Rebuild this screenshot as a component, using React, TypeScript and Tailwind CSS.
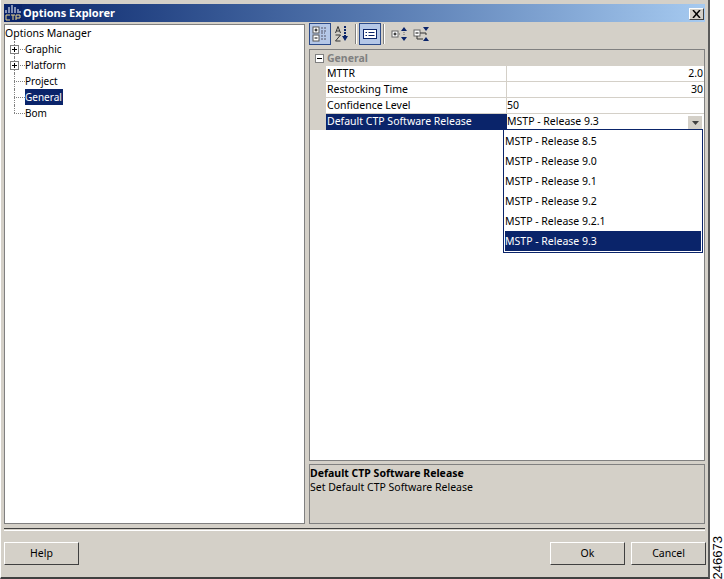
import React from 'react';

const releases = ['MSTP - Release 8.5', 'MSTP - Release 9.0', 'MSTP - Release 9.1', 'MSTP - Release 9.2', 'MSTP - Release 9.2.1', 'MSTP - Release 9.3'];

const rows = [
  { label: 'MTTR', value: '2.0', right: true },
  { label: 'Restocking Time', value: '30', right: true },
  { label: 'Confidence Level', value: '50', right: false },
];

const Expander = () => (
  <span className="w-[9px] h-[9px] border border-[#808080] bg-white flex items-center justify-center shrink-0">
    <svg width="7" height="7" viewBox="0 0 7 7">
      <path d="M1 3.5H6M3.5 1V6" stroke="#000" strokeWidth="1" />
    </svg>
  </span>
);

const TreeRow = ({ label, expand, selected, last }: { label: string; expand?: boolean; selected?: boolean; last?: boolean }) => (
  <div className="h-4 flex items-center relative">
    <div className={`absolute left-[9px] top-0 border-l border-dotted border-[#808080] ${last ? 'h-2' : 'h-4'}`}></div>
    <div className="absolute left-[9px] top-2 w-[11px] border-t border-dotted border-[#808080]"></div>
    {expand && (
      <div className="absolute left-[5px] top-[4px]">
        <Expander />
      </div>
    )}
    <span className={`ml-[20px] pr-px h-4 leading-4 text-[10px] ${selected ? 'bg-[#0a246a] text-white' : ''}`}>{label}</span>
  </div>
);

const ToolBtn = ({ active, children }: { active?: boolean; children: React.ReactNode }) => (
  <div className={`w-[22px] h-[22px] flex items-center justify-center ${active ? 'bg-[#b4c7e7] border border-[#2a4a8a]' : ''}`}>
    {children}
  </div>
);

const DialogButton = ({ label }: { label: string }) => (
  <button className="w-[75px] h-[23px] bg-[#d4d0c8] border border-t-white border-l-white border-r-[#404040] border-b-[#404040]">{label}</button>
);

export default function App() {
  return (
    <div className="w-[724px] h-[579px] bg-white flex overflow-hidden text-[10.5px] text-black font-['Noto_Sans',sans-serif]">
      {/* dialog */}
      <div className="w-[710px] h-[579px] bg-[#d4d0c8] border-r-2 border-r-[#5a5a5a] border-b-2 border-b-[#404040] border-l border-l-white pt-[4px] flex flex-col relative">
        {/* title bar */}
        <div className="h-[18px] bg-gradient-to-r from-[#0a246a] to-[#a6caf0] flex items-center pr-[1px] mx-[3px]">
          <svg width="18" height="18" viewBox="0 0 18 18" className="shrink-0">
            <rect width="18" height="18" fill="#0a246a" />
            <path d="M2 9V6M5 9V3M8 9V1M11 9V3M14 9V5M16 9V7" stroke="#fff" strokeWidth="1" />
            <path d="M6 11H2V16H6M7 11H11M9 11V16M12 16V11H16V14H12" stroke="#e8d48a" strokeWidth="1" fill="none" />
          </svg>
          <span className="ml-[1px] text-white font-bold text-[11px] leading-[18px]">Options Explorer</span>
          <div className="ml-auto mt-px w-[15px] h-[12px] bg-[#d4d0c8] border border-t-white border-l-white border-r-[#404040] border-b-[#404040] flex items-center justify-center">
            <svg width="9" height="8" viewBox="0 0 9 8">
              <path d="M1 0L8 8M8 0L1 8" stroke="#000" strokeWidth="1.5" />
            </svg>
          </div>
        </div>

        <div className="flex-1 flex flex-col px-[3px] pt-[2px]">
          <div className="h-[500px] flex gap-[4px]">
            {/* tree */}
            <div className="w-[301px] bg-white border border-[#808080]">
              <div className="h-4 leading-4">Options Manager</div>
              <TreeRow label="Graphic" expand />
              <TreeRow label="Platform" expand />
              <TreeRow label="Project" />
              <TreeRow label="General" selected />
              <TreeRow label="Bom" last />
            </div>

            {/* property grid */}
            <div className="w-[396px] flex flex-col">
              <div className="h-[25px] flex items-start -mt-px pb-px box-content">
                <ToolBtn active>
                  <svg width="16" height="16" viewBox="0 0 16 16">
                    <rect x="1" y="1" width="6" height="6" fill="#fff" stroke="#555" />
                    <rect x="1" y="9" width="6" height="6" fill="#fff" stroke="#555" />
                    <path d="M2.5 4H5.5M4 2.5V5.5M2.5 12H5.5" stroke="#000" />
                    <path d="M9 2H15M9 5H15M9 7H13M9 10H15M9 13H15" stroke="#556" strokeDasharray="2 1" />
                  </svg>
                </ToolBtn>
                <ToolBtn>
                  <svg width="16" height="18" viewBox="0 0 16 18">
                    <path d="M1.5 8L4 1.5L6.5 8M2.5 6H5.5M1.5 10H6.5L1.5 16H6.5" stroke="#333" fill="none" />
                    <path d="M11 1V12" stroke="#0a246a" strokeWidth="2" strokeDasharray="2 1" />
                    <path d="M8 11H14L11 16Z" fill="#0a246a" />
                  </svg>
                </ToolBtn>
                <div className="w-px h-[20px] bg-[#808080] ml-[2px] mr-[2px] mt-px border-r border-white box-content"></div>
                <ToolBtn active>
                  <svg width="16" height="12" viewBox="0 0 16 12">
                    <rect x="1.5" y="1.5" width="13" height="9" fill="#fff" stroke="#0a246a" />
                    <path d="M3.5 4.5H5M6.5 4.5H12.5M3.5 7.5H5M6.5 7.5H12.5" stroke="#0a246a" />
                  </svg>
                </ToolBtn>
                <div className="w-px h-[20px] bg-[#808080] ml-[2px] mr-[4px] mt-px border-r border-white box-content"></div>
                <ToolBtn>
                  <svg width="18" height="16" viewBox="0 0 18 16">
                    <rect x="1" y="5" width="6" height="6" fill="#fff" stroke="#666" />
                    <path d="M2.5 8H5.5M4 6.5V9.5" stroke="#000" />
                    <path d="M13 1L10 5H16ZM13 15L10 11H16Z" fill="#0a246a" />
                    <path d="M8 8H9M13 6V10" stroke="#666" strokeDasharray="1 1" />
                  </svg>
                </ToolBtn>
                <ToolBtn>
                  <svg width="18" height="16" viewBox="0 0 18 16">
                    <rect x="1" y="4" width="6" height="6" fill="#fff" stroke="#666" />
                    <path d="M2.5 7H5.5" stroke="#000" />
                    <path d="M10 1H16L13 5ZM10 15H16L13 11Z" fill="#0a246a" />
                    <path d="M4 10V13H10M7 7H13V9" stroke="#333" fill="none" />
                  </svg>
                </ToolBtn>
              </div>

              <div className="h-[412px] bg-white border border-[#808080] relative">
                <div className="h-4 bg-[#d4d0c8] flex items-center pl-[5px] pt-[2px]">
                  <span className="w-[9px] h-[9px] -mt-[2px] border border-[#808080] bg-white flex items-center justify-center">
                    <span className="w-[5px] h-px bg-black"></span>
                  </span>
                  <span className="ml-[3px] font-bold text-[#808080]">General</span>
                </div>
                {rows.map((r) => (
                  <div key={r.label} className="h-4 flex border-b border-[#d4d0c8]">
                    <div className="w-4 bg-[#d4d0c8] shrink-0"></div>
                    <div className="w-[181px] pl-px leading-[15px] border-r border-[#d4d0c8]">{r.label}</div>
                    <div className={`flex-1 leading-[15px] pr-px ${r.right ? 'text-right' : ''}`}>{r.value}</div>
                  </div>
                ))}
                <div className="h-4 flex">
                  <div className="w-4 bg-[#d4d0c8] shrink-0"></div>
                  <div className="w-[181px] pl-px leading-[15px] bg-[#0a246a] text-white">Default CTP Software Release</div>
                  <div className="flex-1 leading-[15px] relative">
                    MSTP - Release 9.3
                    <div className="absolute right-[2px] top-[2px] w-[14px] h-[13px] bg-[#d4d0c8] flex items-center justify-center">
                      <svg width="7" height="4" viewBox="0 0 7 4">
                        <path d="M0 0H7L3.5 4Z" fill="#404040" />
                      </svg>
                    </div>
                  </div>
                </div>
                {/* dropdown list */}
                <div className="absolute left-[193px] top-[79px] w-[200px] h-[124px] bg-white border border-[#0a246a] p-px">
                  {releases.map((r, i) => (
                    <div key={r} className={`h-5 leading-5 ${i === 5 ? 'bg-[#0a246a] text-white' : ''}`}>{r}</div>
                  ))}
                </div>
              </div>

              <div className="mt-[3px] h-[60px] border border-[#808080] pt-px leading-[14px]">
                <div className="font-bold">Default CTP Software Release</div>
                <div>Set Default CTP Software Release</div>
              </div>
            </div>
          </div>

          <div className="mt-[4px] h-[3px] border-t border-t-[#404040] border-b border-b-white"></div>

          <div className="mt-[11px] -mr-px flex justify-between">
            <DialogButton label="Help" />
            <div className="flex gap-[6px]">
              <DialogButton label="Ok" />
              <DialogButton label="Cancel" />
            </div>
          </div>
        </div>
      </div>

      {/* figure number */}
      <div className="flex-1 flex items-end justify-center">
        <span className="[writing-mode:vertical-rl] rotate-180 text-[13px] leading-none font-['Liberation_Sans',sans-serif]">246673</span>
      </div>
    </div>
  );
}
